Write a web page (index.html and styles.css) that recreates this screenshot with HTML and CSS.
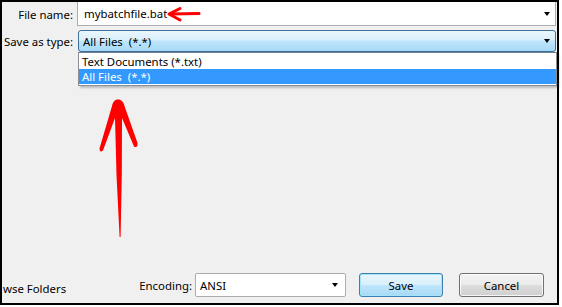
FILE: index.html
```html
<!DOCTYPE html>
<html>
<head>
<meta charset="utf-8">
<link rel="stylesheet" href="styles.css">
</head>
<body>
<div class="frame">
  <div class="fields">
    <label class="lbl">File name:</label>
    <div class="input"><span class="val">mybatchfile.bat</span><span class="tri"></span></div>
    <label class="lbl">Save as type:</label>
    <div class="select hot"><span class="val">All Files&nbsp; (*.*)</span><span class="tri"></span></div>
  </div>
  <div class="bottom">
    <span class="browse">wse Folders</span>
    <span class="enc-lbl">Encoding:</span>
    <div class="enc"><span class="val">ANSI</span><span class="tri"></span></div>
    <button class="btn default">Save</button>
    <button class="btn">Cancel</button>
  </div>
  <ul class="list">
    <li>Text Documents (*.txt)</li>
    <li class="sel">All Files&nbsp; (*.*)</li>
  </ul>
  <svg class="arrow-left" viewBox="164 4 40 20" width="40" height="20">
    <path d="M170,14 L199,13.5" stroke="#f00" stroke-width="3" stroke-linecap="round" fill="none"/>
    <path d="M180,8.5 L169,14 L180,20" stroke="#f00" stroke-width="3" stroke-linecap="round" stroke-linejoin="round" fill="none"/>
  </svg>
  <svg class="arrow-up" viewBox="95 95 50 145" width="50" height="145">
    <path d="M118,99.5 C121.5,99.5 123.5,102 124.5,106 L137.5,143 Q138,148.5 134,146.5 L122,118 L121.8,175 L120.6,237 L119.6,237 L116.5,175 L115,118 L103,150.5 Q99.5,153 99.5,148.5 L112,106 C113,102 114.5,99.5 118,99.5 Z" fill="#f00"/>
  </svg>
</div>
</body>
</html>
```
FILE: styles.css
```css
html, body {
  margin: 0;
  padding: 0;
  background: #fff;
}
body {
  width: 562px;
  height: 307px;
  overflow: hidden;
  font-family: "Noto Sans", "Open Sans", sans-serif;
  font-size: 11.4px;
  color: #000;
}
.frame {
  position: relative;
  box-sizing: border-box;
  width: 559px;
  height: 305px;
  border: 2px solid #000;
  background: #f0f0f0;
  display: flex;
  flex-direction: column;
}
.fields {
  display: grid;
  grid-template-columns: 71px 1fr;
  column-gap: 4px;
  row-gap: 4px;
  padding-right: 1px;
  grid-template-rows: 24px 22px;
}
.lbl {
  text-align: right;
  align-self: center;
  white-space: nowrap;
}
.input {
  box-sizing: border-box;
  background: #fff;
  border: 1px solid #abadb3;
  border-top: none;
  display: flex;
  align-items: center;
  padding-left: 6px;
  padding-right: 5px;
}
.val {
  flex: 1;
  white-space: pre;
}
.tri {
  width: 0;
  height: 0;
  border-left: 3.5px solid transparent;
  border-right: 3.5px solid transparent;
  border-top: 4px solid #000;
}
.select {
  box-sizing: border-box;
  margin-left: 1px;
  border: 1px solid #3c6f99;
  border-radius: 3px;
  display: flex;
  align-items: center;
  padding-left: 4px;
  padding-right: 5px;
}
.select.hot {
  background: linear-gradient(#eaf6fd 0%, #d9f0fc 45%, #bee6fd 50%, #a7d9f5 100%);
}
.list {
  position: absolute;
  left: 76px;
  top: 50px;
  width: 479px;
  margin: 0;
  padding: 1px 0;
  list-style: none;
  box-sizing: border-box;
  background: #fff;
  border: 1px solid #8a8f96;
  border-top: 1px solid #6e7f90;
  box-shadow: 2px 2px 2px rgba(0, 0, 0, 0.22);
}
.list li {
  height: 15px;
  line-height: 15px;
  padding-left: 3px;
}
.list li.sel {
  background: #3399ff;
  color: #fff;
}
.bottom {
  margin-top: auto;
  display: flex;
  align-items: center;
  height: 24px;
  padding-bottom: 6px;
  padding-right: 13px;
}
.browse {
  flex: 1;
  align-self: flex-end;
  position: relative;
  top: -1px;
  padding-left: 1px;
  white-space: nowrap;
}
.enc-lbl {
  margin-right: 3px;
}
.enc {
  box-sizing: border-box;
  width: 151px;
  height: 24px;
  background: #fff;
  border: 1px solid #abadb3;
  border-radius: 2px;
  display: flex;
  align-items: center;
  padding-left: 4px;
  padding-right: 7px;
  margin-right: 13px;
}
.btn {
  box-sizing: border-box;
  height: 24px;
  width: 85px;
  font-family: inherit;
  font-size: 11.4px;
  color: #000;
  border: 1px solid #707070;
  border-radius: 3px;
  background: linear-gradient(#f2f2f2 0%, #ebebeb 48%, #dddddd 52%, #cfcfcf 100%);
  box-shadow: inset 0 0 0 1px rgba(255, 255, 255, 0.8);
  padding: 0;
}
.btn.default {
  width: 84px;
  margin-right: 16px;
  border-color: #3c7fb1;
  background: linear-gradient(#eaf6fd 0%, #d9f0fc 48%, #bee6fd 52%, #a7d9f5 100%);
  box-shadow: inset 0 0 0 1px #a6e4fb;
}
.arrow-left {
  position: absolute;
  left: 162px;
  top: 2px;
}
.arrow-up {
  position: absolute;
  left: 93px;
  top: 93px;
}
```
